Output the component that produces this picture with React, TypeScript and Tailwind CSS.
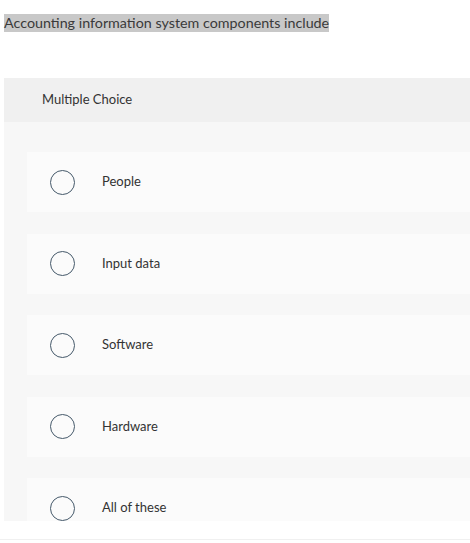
import React from 'react';

const options = ['People', 'Input data', 'Software', 'Hardware', 'All of these'];

const App: React.FC = () => {
  return (
    <div className="w-[470px] h-[543px] bg-white overflow-hidden" style={{ fontFamily: 'Lato, "Open Sans", sans-serif' }}>
      <div className="pt-[14px] pl-[4px] h-[78px] flex items-start">
        <span className="bg-[#c8c8c8] text-[#3a3a3a] text-[14.3px] leading-[18px] block">
          Accounting information system components include
        </span>
      </div>
      <div className="ml-[4px]">
        <div className="h-[44px] bg-[#f0f0f0] flex items-center pl-[38px] text-[13px] text-[#333]">
          Multiple Choice
        </div>
        <div className="h-[399px] bg-[#f7f7f7] pl-[23px] pt-[30px] overflow-hidden flex flex-col gap-[21.5px]">
          {options.map((opt) => (
            <div key={opt} className="h-[60px] shrink-0 bg-[#fbfbfb] flex items-center pl-[23px]">
              <div className="w-[25px] h-[25px] rounded-full border-[1.3px] border-[#45596a] shrink-0" />
              <span className="ml-[27px] text-[13px] text-[#333]">{opt}</span>
            </div>
          ))}
        </div>
      </div>
      <div className="mt-[18px] border-t border-[#f0f0f0]" />
    </div>
  );
};

export default App;
